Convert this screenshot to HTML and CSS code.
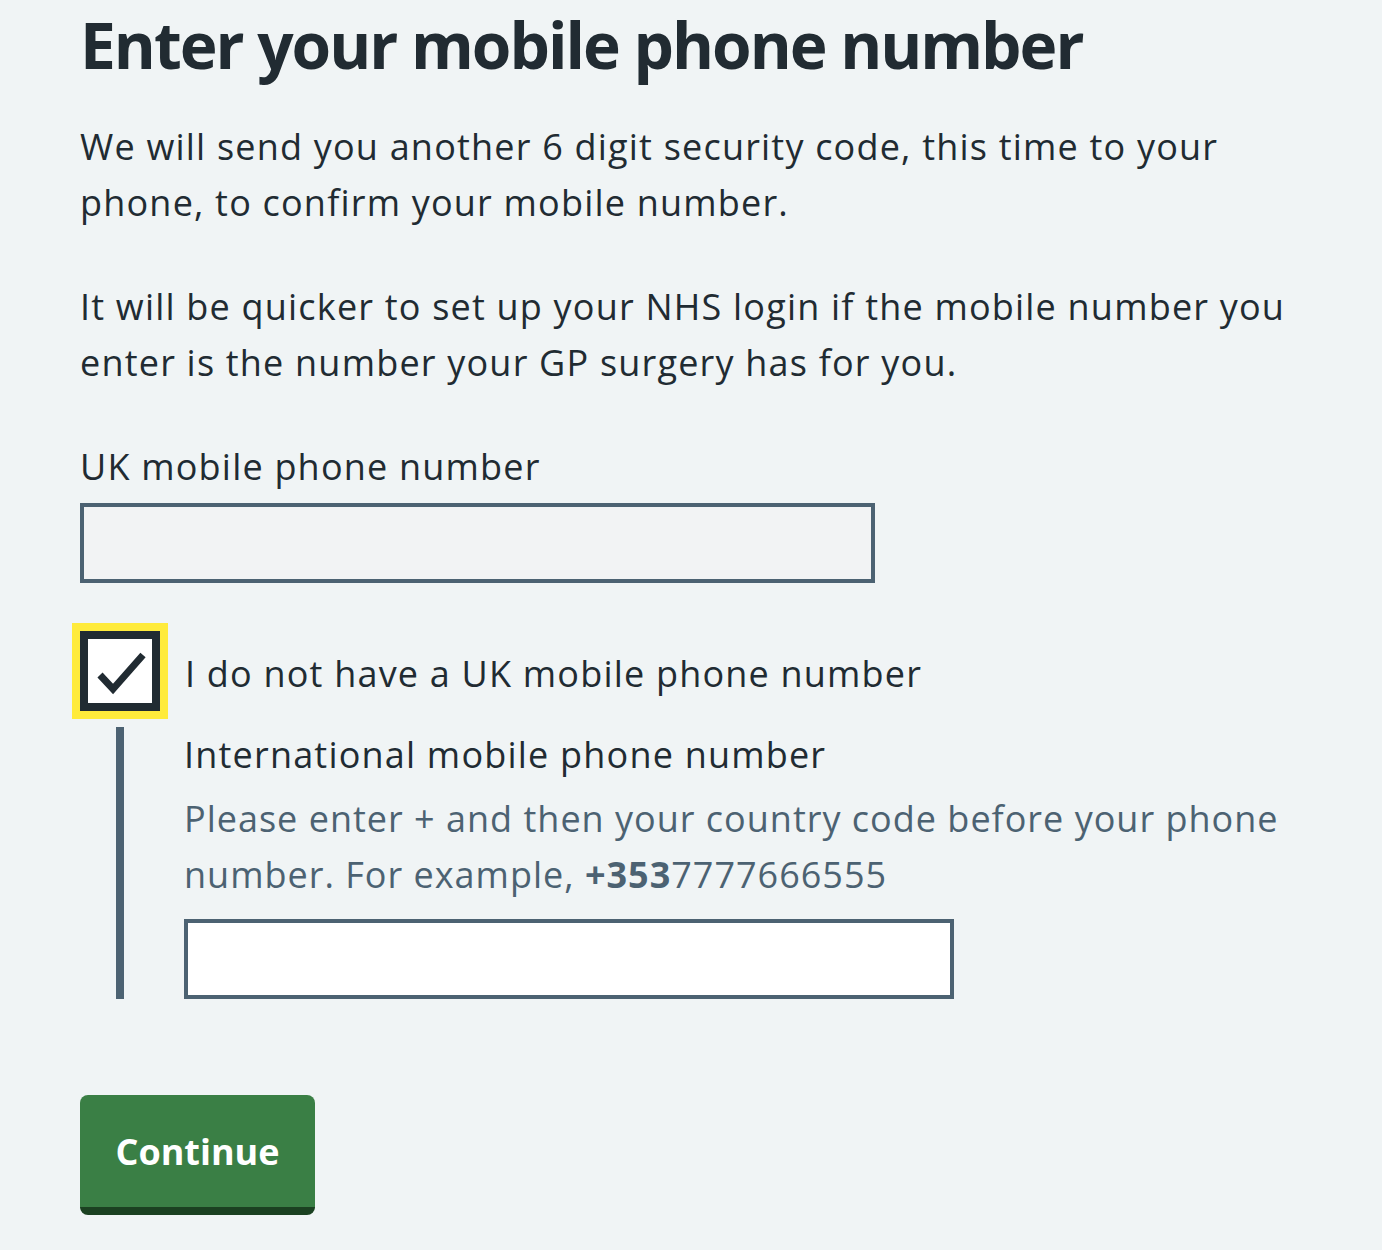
FILE: index.html
```html
<!DOCTYPE html>
<html lang="en">
<head>
    <meta charset="UTF-8">
    <meta name="viewport" content="width=device-width, initial-scale=1.0">
    <title>Enter your mobile phone number - NHS login</title>
    <link rel="stylesheet" href="styles.css">
</head>
<body>

    <div class="container">
        <h1>Enter your mobile phone number</h1>

        <p>We will send you another 6 digit security code, this time to your phone, to confirm your mobile number.</p>
        <p>It will be quicker to set up your NHS login if the mobile number you enter is the number your GP surgery has for you.</p>

        <label class="label" for="mobile">UK mobile phone number</label>
        <input type="tel" id="mobile" class="input-field input-grey">

        <div class="checkbox-item">
            <span class="checkbox-box">
                <svg width="64" height="64" viewBox="0 0 64 64">
                    <path d="M12 36 L25 50 L55 16" fill="none" stroke="#212b32" stroke-width="7"/>
                </svg>
            </span>
            <label class="checkbox-label">I do not have a UK mobile phone number</label>
        </div>

        <div class="conditional">
            <label class="label label-tight" for="intl">International mobile phone number</label>
            <div class="hint">Please enter + and then your country code before your phone number. For example, <b>+353</b>7777666555</div>
            <input type="tel" id="intl" class="input-field input-wide">
        </div>

        <button class="btn">Continue</button>
    </div>

</body>
</html>
```

FILE: styles.css
```css
* {
    margin: 0;
    padding: 0;
    box-sizing: border-box;
    font-family: 'Open Sans', sans-serif;
}

body {
    background-color: #f0f4f5;
    color: #212b32;
}

.container {
    width: 1305px;
    padding: 9px 0 0 80px;
}

h1 {
    font-size: 64px;
    line-height: 72px;
    font-weight: 700;
    letter-spacing: -2px;
    margin-bottom: 38px;
}

p, .label, .checkbox-label, .hint {
    font-size: 36px;
    line-height: 56px;
    letter-spacing: 1.2px;
}

p {
    margin-bottom: 48px;
}

.label {
    display: block;
    margin-bottom: 8px;
}

.label-tight {
    margin-bottom: 8px;
}

.input-field {
    display: block;
    height: 80px;
    border: 4px solid #4c6272;
    font-size: 32px;
    padding: 0 16px;
}

.input-grey {
    width: 795px;
    background-color: #f2f3f4;
    margin-bottom: 48px;
}

.input-wide {
    width: 770px;
    background-color: white;
}

.checkbox-item {
    display: flex;
    align-items: flex-start;
}

.checkbox-box {
    width: 80px;
    height: 80px;
    border: 8px solid #212b32;
    background: white;
    outline: 8px solid #ffeb3b;
    flex-shrink: 0;
}

.checkbox-box svg {
    display: block;
}

.checkbox-label {
    padding: 15px 0 0 25px;
}

.conditional {
    margin: 16px 0 0 36px;
    padding-left: 60px;
    border-left: 8px solid #4c6272;
}

.hint {
    color: #4c6272;
    letter-spacing: 1px;
    margin-bottom: 16px;
}

.btn {
    display: block;
    margin-top: 96px;
    width: 235px;
    height: 120px;
    background-color: #3a7f45;
    color: white;
    border: none;
    border-bottom: 8px solid #1b4121;
    border-radius: 8px;
    font-size: 36px;
    font-weight: 700;
    cursor: pointer;
}
```
